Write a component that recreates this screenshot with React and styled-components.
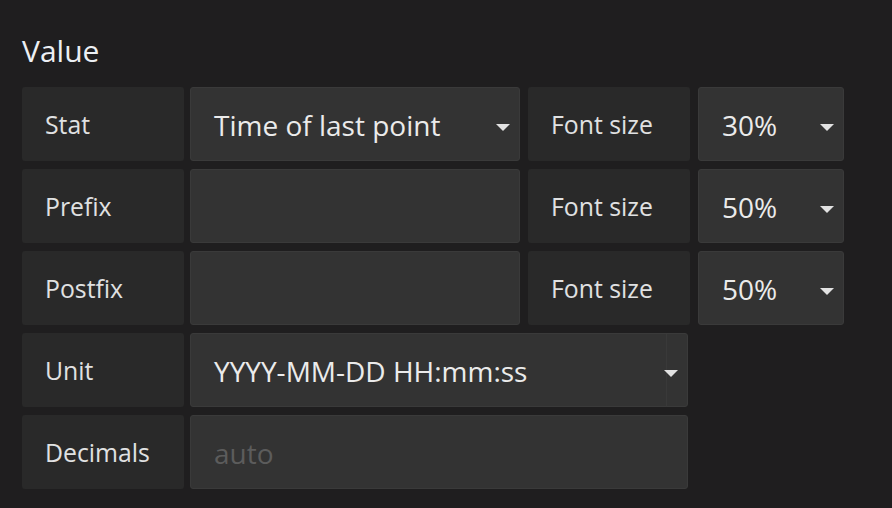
import React from "react";
import styled, { createGlobalStyle } from "styled-components";

const GlobalStyle = createGlobalStyle`
  html, body {
    margin: 0;
    padding: 0;
    background: #1f1e1f;
  }
  body {
    font-family: "Open Sans", "Noto Sans", sans-serif;
    color: #d8d9da;
  }
`;

const Page = styled.div`
  width: 892px;
  height: 508px;
  box-sizing: border-box;
  padding: 33px 0 0 22px;
  background: #1f1e1f;
  overflow: hidden;
`;

const Heading = styled.div`
  font-size: 30px;
  line-height: 36px;
  color: #eceff3;
  margin-bottom: 18px;
`;

const Rows = styled.div`
  display: flex;
  flex-direction: column;
  gap: 8px;
`;

const Row = styled.div`
  display: flex;
  height: 74px;
  gap: 8px;
`;

const Cell = styled.div`
  box-sizing: border-box;
  height: 100%;
  display: flex;
  align-items: center;
  border-radius: 3px;
`;

const Label = styled(Cell)`
  width: 162px;
  padding-left: 23px;
  background: #292929;
  color: #e0e1e2;
  font-size: 24.8px;
`;

const Field = styled(Cell)`
  width: ${({ $w }) => $w}px;
  margin-left: ${({ $first }) => ($first ? "-2px" : "0")};
  padding: 0 9px 0 23px;
  background: #333333;
  border: 1px solid #3a3a3a;
  color: ${({ $placeholder }) => ($placeholder ? "#5c5c5c" : "#ebebeb")};
  font-size: 28px;
  justify-content: space-between;
`;

const SelectText = styled.span`
  flex: 1;
  height: 100%;
  display: flex;
  align-items: center;
  padding-top: 1px;
  border-right: ${({ $divider }) => ($divider ? "1px solid #393939" : "none")};
  margin-right: ${({ $divider }) => ($divider ? "-1px" : "0")};
`;

const Caret = styled.span`
  width: 0;
  height: 0;
  margin-top: 6px;
  margin-left: ${({ $gap }) => $gap || 0}px;
  border-left: 7.5px solid transparent;
  border-right: 7.5px solid transparent;
  border-top: 7.5px solid #e2e2e2;
`;

const rows = [
  { label: "Stat", value: "Time of last point", select: true, size: "30%" },
  { label: "Prefix", value: "", size: "50%" },
  { label: "Postfix", value: "", size: "50%" },
];

export default function App() {
  return (
    <Page>
      <GlobalStyle />
      <Heading>Value</Heading>
      <Rows>
        {rows.map((r) => (
          <Row key={r.label}>
            <Label>{r.label}</Label>
            <Field $w={330} $first>
              <SelectText>{r.value}</SelectText>
              {r.select && <Caret />}
            </Field>
            <Label>Font size</Label>
            <Field $w={146}>
              <SelectText>{r.size}</SelectText>
              <Caret />
            </Field>
          </Row>
        ))}
        <Row>
          <Label>Unit</Label>
          <Field $w={498} $first>
            <SelectText $divider>YYYY-MM-DD HH:mm:ss</SelectText>
            <Caret $gap={-2} />
          </Field>
        </Row>
        <Row>
          <Label>Decimals</Label>
          <Field $w={498} $first $placeholder>
            <SelectText>auto</SelectText>
          </Field>
        </Row>
      </Rows>
    </Page>
  );
}
